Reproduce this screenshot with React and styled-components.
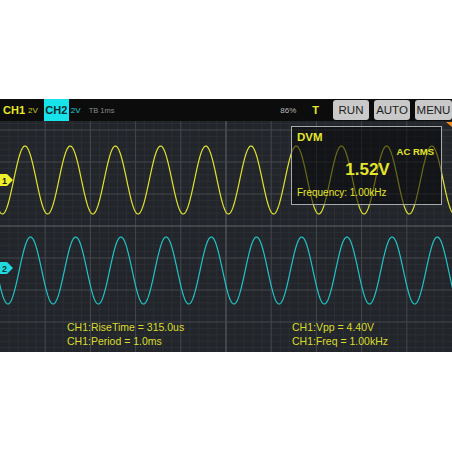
import React from "react";
import styled, { createGlobalStyle } from "styled-components";

const Global = createGlobalStyle`
  html, body { margin: 0; padding: 0; background: #fff; }
  body { font-family: "Liberation Sans", Arial, sans-serif; }
`;

const Page = styled.div`
  width: 452px;
  height: 452px;
  display: flex;
  flex-direction: column;
  justify-content: flex-start;
  padding-top: 99px;
  box-sizing: border-box;
  background: #fff;
`;

const Screen = styled.div`
  width: 452px;
  height: 253px;
  display: flex;
  flex-direction: column;
  background: #22252a;
`;

const Header = styled.div`
  height: 22px;
  background: #0c0c0c;
  display: flex;
  align-items: center;
  padding-left: 3px;
  box-sizing: border-box;
`;

const ChLabel = styled.div`
  height: 22px;
  display: flex;
  align-items: center;
  padding: 0 ${(p) => (p.$active ? "1.5px" : "0")};
  background: ${(p) => (p.$active ? "#19e3ea" : "transparent")};
  color: ${(p) => (p.$active ? "#0a2a30" : p.$color)};
  font-size: 11px;
  font-weight: bold;
  margin-right: ${(p) => p.$mr ?? 3}px;
`;

const Small = styled.span`
  color: ${(p) => p.$color};
  font-size: ${(p) => p.$fs || 8}px;
  margin-right: ${(p) => p.$mr || 0}px;
`;

const Spacer = styled.div`
  flex: 1;
`;

const Buttons = styled.div`
  display: flex;
  gap: 5px;
  height: 22px;
  align-items: center;
`;

const Btn = styled.div`
  width: ${(p) => p.$w || 36}px;
  height: 20px;
  background: #c9c9c9;
  color: #1c1c1c;
  font-size: 11.5px;
  display: flex;
  align-items: center;
  justify-content: center;
  border-radius: 3px;
`;

const Plot = styled.div`
  position: relative;
  flex: 1;
  overflow: hidden;
`;

const Canvas = styled.svg`
  position: absolute;
  left: 0;
  top: 0;
`;

const Dvm = styled.div`
  position: absolute;
  left: 291px;
  top: 5px;
  width: 151px;
  height: 79px;
  box-sizing: border-box;
  border: 1.5px solid #a9abad;
  background: rgba(8, 8, 10, 0.55);
  color: #e4e62c;
  display: grid;
  grid-template-rows: 18px 1fr 18px;
  padding: 2px 5px 0 5px;
`;

const DvmTitle = styled.div`
  font-size: 11.5px;
  font-weight: bold;
  line-height: 16px;
`;

const DvmMid = styled.div`
  position: relative;
  display: flex;
  align-items: center;
  justify-content: center;
`;

const DvmValue = styled.div`
  font-size: 17px;
  font-weight: bold;
  margin-left: 2px;
  margin-top: 6px;
`;

const AcRms = styled.div`
  position: absolute;
  right: 2px;
  top: -1px;
  font-size: 9.5px;
  font-weight: bold;
`;

const DvmFreq = styled.div`
  font-size: 10px;
  line-height: 14px;
`;

const Meas = styled.div`
  position: absolute;
  left: ${(p) => p.$x}px;
  top: 200px;
  display: flex;
  flex-direction: column;
  color: #d9dc2c;
  font-size: 10.5px;
  line-height: 13.5px;
`;

const W = 452;
const H = 231;
const DIV = 45.2;

function wave(cx, cy, amp) {
  const pts = [];
  for (let x = -2; x <= W + 2; x += 0.5) {
    const y = cy - amp * Math.cos((2 * Math.PI * (x - cx)) / DIV);
    pts.push(`${x.toFixed(1)},${y.toFixed(2)}`);
  }
  return pts.join(" ");
}

function Grid() {
  const lines = [];
  for (let i = 0; i <= 50; i++) {
    const x = (i * DIV) / 5;
    if (i % 5 !== 0)
      lines.push(<line key={"mv" + i} x1={x} x2={x} y1={0} y2={H} stroke="#2c3035" strokeWidth="1" />);
  }
  for (let j = -40; j <= 40; j++) {
    const y = 105 + (j * 32) / 5;
    if (y < 0 || y > H) continue;
    if (j % 5 !== 0)
      lines.push(<line key={"mh" + j} x1={0} x2={W} y1={y} y2={y} stroke="#2c3035" strokeWidth="1" />);
  }
  for (let i = 1; i < 10; i++) {
    const x = i * DIV;
    lines.push(
      <line key={"v" + i} x1={x} x2={x} y1={0} y2={H} stroke={i === 5 ? "#62666a" : "#44484d"} strokeWidth="1" />
    );
  }
  for (let j = -3; j <= 3; j++) {
    const y = 105 + j * 32;
    lines.push(
      <line key={"h" + j} x1={0} x2={W} y1={y} y2={y} stroke={j === 0 ? "#62666a" : "#44484d"} strokeWidth="1" />
    );
  }
  return <g>{lines}</g>;
}

export default function App() {
  return (
    <>
      <Global />
      <Page>
        <Screen>
          <Header>
            <ChLabel $color="#e6e82a">CH1</ChLabel>
            <Small $color="#c9cc22" $mr={6}>2V</Small>
            <ChLabel $active $mr={2}>CH2</ChLabel>
            <Small $color="#19d0d8" $mr={8}>2V</Small>
            <Small $color="#8a8a8a" $fs={7.5}>TB 1ms</Small>
            <Spacer />
            <Small $color="#b8b8b8" $mr={16}>86%</Small>
            <ChLabel $color="#e6e82a" $mr={14}>T</ChLabel>
            <Buttons>
              <Btn>RUN</Btn>
              <Btn>AUTO</Btn>
              <Btn $w={37}>MENU</Btn>
            </Buttons>
          </Header>
          <Plot>
            <Canvas width={W} height={H} viewBox={`0 0 ${W} ${H}`}>
              <Grid />
              <polyline points={wave(25, 59, 34)} fill="none" stroke="#e2e42c" strokeWidth="1.2" />
              <polyline points={wave(30.5, 149.5, 33.5)} fill="none" stroke="#20c4c8" strokeWidth="1.2" />
              <polygon points="0,53 7,53 13,59 7,65 0,65" fill="#f0f02a" />
              <text x="2" y="63" fontSize="9" fontWeight="bold" fill="#222" fontFamily="Liberation Sans, sans-serif">1</text>
              <polygon points="0,141 7,141 13,147 7,153 0,153" fill="#22d8dc" />
              <text x="2" y="151" fontSize="9" fontWeight="bold" fill="#0b3a3c" fontFamily="Liberation Sans, sans-serif">2</text>
              <polygon points="446,1 452,1 452,6" fill="#f08a1a" />
            </Canvas>
            <Dvm>
              <DvmTitle>DVM</DvmTitle>
              <DvmMid>
                <DvmValue>1.52V</DvmValue>
                <AcRms>AC RMS</AcRms>
              </DvmMid>
              <DvmFreq>Frequency: 1.00kHz</DvmFreq>
            </Dvm>
            <Meas $x={67}>
              <span>CH1:RiseTime = 315.0us</span>
              <span>CH1:Period = 1.0ms</span>
            </Meas>
            <Meas $x={292}>
              <span>CH1:Vpp = 4.40V</span>
              <span>CH1:Freq = 1.00kHz</span>
            </Meas>
          </Plot>
        </Screen>
      </Page>
    </>
  );
}
